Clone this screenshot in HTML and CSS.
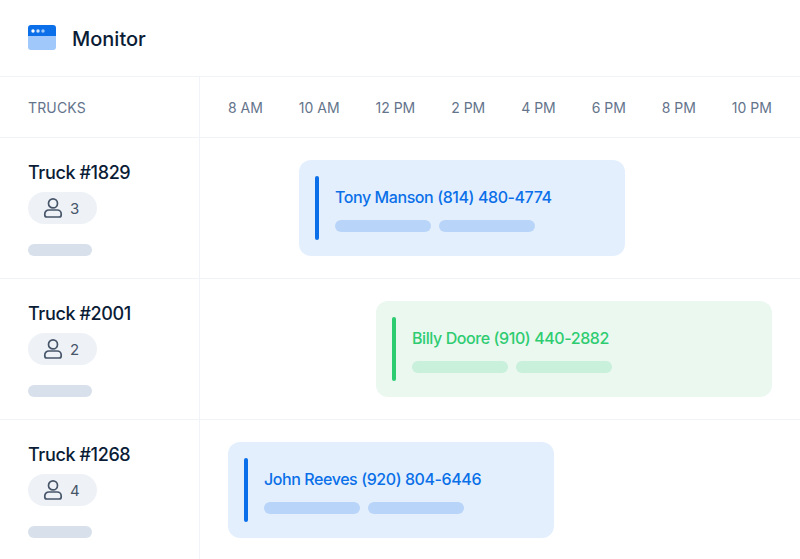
FILE: index.html
```html
<!DOCTYPE html>
<html lang="en">
<head>
<meta charset="utf-8">
<title>Monitor</title>
<link rel="stylesheet" href="styles.css">
</head>
<body>
<div class="app">
  <header class="top">
    <svg class="logo" width="28" height="25" viewBox="0 0 28 25">
      <path d="M0 11h28v11a3 3 0 0 1-3 3H3a3 3 0 0 1-3-3z" fill="#a0c8fa"/>
      <path d="M3 0h22a3 3 0 0 1 3 3v8H0V3a3 3 0 0 1 3-3z" fill="#0a6fe8"/>
      <circle cx="5" cy="6" r="1.7" fill="#fff"/>
      <circle cx="10" cy="6" r="1.7" fill="#cfe2fb"/>
      <circle cx="15" cy="6" r="1.7" fill="#a0c8fa"/>
    </svg>
    <h1 class="title">Monitor</h1>
  </header>
  <div class="row head">
    <div class="side side-head">TRUCKS</div>
    <div class="hours">
      <span>8 AM</span><span>10 AM</span><span>12 PM</span><span>2 PM</span><span>4 PM</span><span>6 PM</span><span>8 PM</span><span>10 PM</span>
    </div>
  </div>
  <div class="row truck">
    <div class="side">
      <div class="name">Truck #1829</div>
      <div class="count">
        <svg class="person" width="20" height="20" viewBox="0 0 20 20"><circle cx="10" cy="5.4" r="4.5"/><path d="M1.800 17v-1a4 4 0 0 1 4-4h8.400a4 4 0 0 1 4 4v1a2 2 0 0 1-2 2H3.800a2 2 0 0 1-2-2z"/></svg>
        <span>3</span>
      </div>
      <div class="stub"></div>
    </div>
    <div class="lane">
      <div class="job blue start-a">
        <div class="accent"></div>
        <div class="info">
          <div class="who">Tony Manson (814) 480-4774</div>
          <div class="pills"><i></i><i></i></div>
        </div>
      </div>
    </div>
  </div>
  <div class="row truck">
    <div class="side">
      <div class="name">Truck #2001</div>
      <div class="count">
        <svg class="person" width="20" height="20" viewBox="0 0 20 20"><circle cx="10" cy="5.4" r="4.5"/><path d="M1.800 17v-1a4 4 0 0 1 4-4h8.400a4 4 0 0 1 4 4v1a2 2 0 0 1-2 2H3.800a2 2 0 0 1-2-2z"/></svg>
        <span>2</span>
      </div>
      <div class="stub"></div>
    </div>
    <div class="lane">
      <div class="job green start-b">
        <div class="accent"></div>
        <div class="info">
          <div class="who">Billy Doore (910) 440-2882</div>
          <div class="pills"><i></i><i></i></div>
        </div>
      </div>
    </div>
  </div>
  <div class="row truck last">
    <div class="side">
      <div class="name">Truck #1268</div>
      <div class="count">
        <svg class="person" width="20" height="20" viewBox="0 0 20 20"><circle cx="10" cy="5.4" r="4.5"/><path d="M1.800 17v-1a4 4 0 0 1 4-4h8.400a4 4 0 0 1 4 4v1a2 2 0 0 1-2 2H3.800a2 2 0 0 1-2-2z"/></svg>
        <span>4</span>
      </div>
      <div class="stub"></div>
    </div>
    <div class="lane">
      <div class="job blue start-c">
        <div class="accent"></div>
        <div class="info">
          <div class="who">John Reeves (920) 804-6446</div>
          <div class="pills"><i></i><i></i></div>
        </div>
      </div>
    </div>
  </div>
</div>
</body>
</html>
```
FILE: styles.css
```css
* { box-sizing: border-box; }
html, body { margin: 0; padding: 0; background: #fff; }
body { font-family: Inter, "Liberation Sans", sans-serif; overflow: hidden; }
.app { width: 800px; height: 559px; display: flex; flex-direction: column; }
.top { height: 77px; display: flex; align-items: center; gap: 16px; padding-left: 28px; border-bottom: 1px solid #f0f3f8; }
.logo { display: block; margin-top: -1px; }
.title { margin: 2px 0 0; font-size: 20px; font-weight: 500; color: #0b1c36; }
.row { display: flex; border-bottom: 1px solid #f0f3f8; }
.head { height: 61px; }
.truck { height: 141px; }
.truck.last { height: 139px; border-bottom: 0; }
.side { width: 200px; flex: none; padding: 22px 0 0 28px; border-right: 1px solid #f0f3f8; }
.side-head { padding-top: 1px; display: flex; align-items: center; font-size: 14px; letter-spacing: 0.15px; color: #64748b; }
.hours { flex: 1; display: flex; justify-content: space-between; align-items: center; padding: 1px 28px 0; font-size: 14px; color: #64748b; }
.name { padding-top: 1px; font-size: 18px; line-height: 23px; font-weight: 500; letter-spacing: -0.38px; color: #0b1c36; }
.count { width: 69px; height: 32px; margin-top: 8px; border-radius: 16px; background: #eef2f7; display: flex; align-items: center; gap: 7px; padding-left: 15px; font-size: 15px; color: #475569; }
.person { fill: none; stroke: #475569; stroke-width: 1.7; stroke-linejoin: round; }
.stub { width: 64px; height: 12px; margin-top: 20px; border-radius: 6px; background: #d8e1eb; }
.lane { flex: 1; padding-top: 22px; }
.job { height: 96px; border-radius: 12px; padding: 16px; display: flex; gap: 16px; }
.start-a { width: 326px; margin-left: 99px; }
.start-b { width: 396px; margin-left: 176px; }
.start-c { width: 326px; margin-left: 28px; }
.accent { width: 4px; border-radius: 2px; }
.info { padding-top: 10px; }
.who { font-size: 16px; line-height: 22px; font-weight: 500; letter-spacing: -0.42px; }
.pills { display: flex; gap: 8px; margin-top: 12px; }
.pills i { display: block; width: 96px; height: 12px; border-radius: 6px; }
.blue { background: #e4effd; color: #0a6fe8; }
.blue .accent { background: #0a6fe8; }
.blue .pills i { background: #b8d5f9; }
.green { background: #eaf8f0; color: #2ecc71; }
.green .accent { background: #2ecc71; }
.green .pills i { background: #c8f0da; }
```
